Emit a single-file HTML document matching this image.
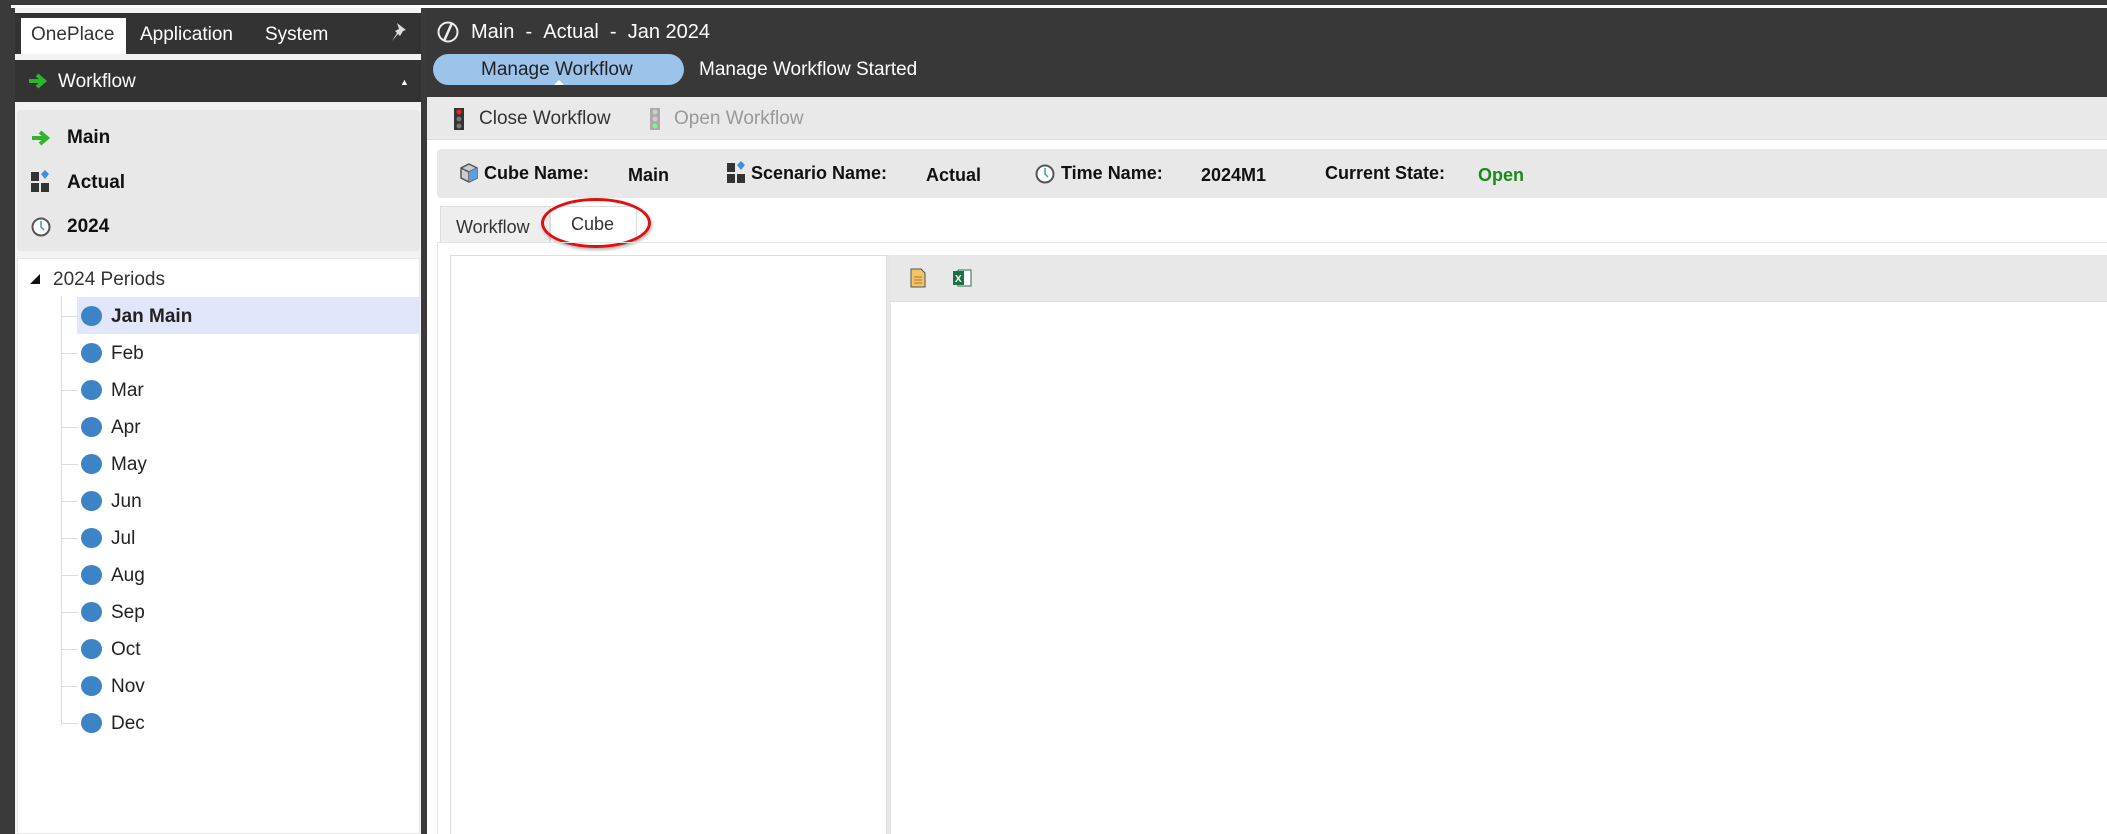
<!DOCTYPE html>
<html><head><meta charset="utf-8"><style>
*{box-sizing:border-box;margin:0;padding:0}
body{width:2107px;height:834px;background:#3a3a3a;position:relative;overflow:hidden;font-family:"Liberation Sans",sans-serif;}
.a{position:absolute}
.t{position:absolute;white-space:nowrap}
</style></head><body>
<div class="a" style="left:0;top:0;width:2107px;height:5px;background:#3a3a3a"></div>
<div class="a" style="left:11px;top:5px;width:2096px;height:3px;background:#fff"></div>
<!-- left panel -->
<div class="a" style="left:15px;top:8px;width:406px;height:826px;background:#f3f3f3"></div>
<div class="a" style="left:15px;top:13px;width:406px;height:41px;background:#333"></div>
<div class="a" style="left:21px;top:18px;width:105px;height:36px;background:#fff"></div>
<div class="t" style="left:31px;top:24px;font-size:19px;color:#333">OnePlace</div>
<div class="t" style="left:140px;top:24px;font-size:19px;color:#fff">Application</div>
<div class="t" style="left:265px;top:24px;font-size:19px;color:#fff">System</div>
<svg class="a" style="left:389px;top:21px" width="20" height="22" viewBox="0 0 20 22"><path d="M8 2l9 7-3 1-3 5-2-2-6 7 5-8-2-2 4-2z" fill="#ddd"/></svg>
<div class="a" style="left:15px;top:60px;width:406px;height:42px;background:#333"></div>
<svg class="a" style="left:27px;top:72px" width="22" height="18"><path d="M2 9h14M10 3l7 6-7 6" stroke="#2db52d" stroke-width="4" fill="none"/></svg>
<div class="t" style="left:58px;top:71px;font-size:19px;color:#fff">Workflow</div>
<div class="t" style="left:400px;top:77px;font-size:9px;color:#fff">▲</div>
<div class="a" style="left:17px;top:110px;width:403px;height:141px;background:#e8e8e8;border-radius:3px"></div>
<svg class="a" style="left:30px;top:129px" width="22" height="18"><path d="M2 9h14M10 3l7 6-7 6" stroke="#2db52d" stroke-width="4" fill="none"/></svg>
<div class="t" style="left:67px;top:127px;font-size:19px;font-weight:bold;color:#111">Main</div>
<svg class="a" style="left:30px;top:170px" width="22" height="24"><rect x="1" y="2" width="8" height="9" fill="#333"/><rect x="1" y="13" width="8" height="9" fill="#333"/><rect x="11" y="13" width="8" height="9" fill="#333"/><path d="M15 0l4 4-4 5-4-5z" fill="#3f8fd8"/></svg>
<div class="t" style="left:67px;top:172px;font-size:19px;font-weight:bold;color:#111">Actual</div>
<svg class="a" style="left:30px;top:216px" width="22" height="22"><circle cx="11" cy="11" r="8.5" stroke="#555" stroke-width="2" fill="#fff"/><path d="M11 5v6l3 3" stroke="#3f8fd8" stroke-width="1.5" fill="none"/></svg>
<div class="t" style="left:67px;top:216px;font-size:19px;font-weight:bold;color:#111">2024</div>
<div class="a" style="left:17px;top:258px;width:403px;height:576px;background:#fff;border:1px solid #e6e6e6"></div>
<svg class="a" style="left:28px;top:272px" width="14" height="14"><path d="M12 2v10H2z" fill="#111"/></svg>
<div class="t" style="left:53px;top:269px;font-size:19px;color:#333">2024 Periods</div>
<div class="a" style="left:61px;top:296px;width:1px;height:430px;background:#ddd"></div>
<div class="a" style="left:77px;top:297px;width:342px;height:37px;background:#e2e6fb"></div>
<div id="tree"></div>
<!-- right panel -->
<div class="a" style="left:427px;top:8px;width:1680px;height:826px;background:#fff"></div>
<div class="a" style="left:427px;top:8px;width:1680px;height:89px;background:#383838"></div>
<svg class="a" style="left:436px;top:20px" width="24" height="24"><circle cx="12" cy="12" r="9.5" stroke="#eee" stroke-width="2" fill="none"/><path d="M16 3L8 21" stroke="#eee" stroke-width="2.5"/></svg>
<div class="t" style="left:471px;top:21px;font-size:20px;color:#fff">Main &nbsp;- &nbsp;Actual &nbsp;- &nbsp;Jan 2024</div>
<div class="a" style="left:433px;top:54px;width:251px;height:31px;background:#9cc3ea;border-radius:16px"></div>
<div class="t" style="left:481px;top:59px;font-size:19px;color:#222">Manage Workflow</div>
<div class="a" style="left:554px;top:80px;width:0;height:0;border-left:5px solid transparent;border-right:5px solid transparent;border-bottom:5px solid #fff"></div>
<div class="t" style="left:699px;top:59px;font-size:19px;color:#fff">Manage Workflow Started</div>
<div class="a" style="left:427px;top:97px;width:1680px;height:43px;background:#e9e9e9;border-bottom:1px solid #ddd"></div>
<svg class="a" style="left:454px;top:108px" width="10" height="22"><rect width="10" height="22" fill="#333"/><circle cx="5" cy="4" r="2.5" fill="#e22"/><circle cx="5" cy="11" r="2.5" fill="#777"/><circle cx="5" cy="18" r="2.5" fill="#777"/></svg>
<div class="t" style="left:479px;top:108px;font-size:19px;color:#333">Close Workflow</div>
<svg class="a" style="left:650px;top:108px" width="10" height="22"><rect width="10" height="22" fill="#aaa"/><circle cx="5" cy="4" r="2.5" fill="#ccc"/><circle cx="5" cy="11" r="2.5" fill="#ccc"/><circle cx="5" cy="18" r="2.5" fill="#8e8"/></svg>
<div class="t" style="left:674px;top:108px;font-size:19px;color:#999">Open Workflow</div>
<div class="a" style="left:437px;top:149px;width:1670px;height:49px;background:#e8e8e8;border-radius:4px 0 0 4px"></div>
<svg class="a" style="left:460px;top:163px" width="18" height="20"><path d="M9 1l8 4v10l-8 4-8-4V5z" fill="#ccc" stroke="#555" stroke-width="1.5"/><path d="M9 9v10M1 5l8 4 8-4" stroke="#555" stroke-width="1.5" fill="none"/><path d="M9 9l8-4v10l-8 4z" fill="#5aa0e0"/></svg>
<div class="t" style="left:484px;top:163px;font-size:18px;font-weight:bold;color:#111">Cube Name:</div>
<div class="t" style="left:628px;top:165px;font-size:18px;font-weight:bold;color:#111">Main</div>
<svg class="a" style="left:726px;top:161px" width="22" height="24"><rect x="1" y="2" width="8" height="9" fill="#333"/><rect x="1" y="13" width="8" height="9" fill="#333"/><rect x="11" y="13" width="8" height="9" fill="#333"/><path d="M15 0l4 4-4 5-4-5z" fill="#3f8fd8"/></svg>
<div class="t" style="left:751px;top:163px;font-size:18px;font-weight:bold;color:#111">Scenario Name:</div>
<div class="t" style="left:926px;top:165px;font-size:18px;font-weight:bold;color:#111">Actual</div>
<svg class="a" style="left:1034px;top:163px" width="22" height="22"><circle cx="11" cy="11" r="8.5" stroke="#555" stroke-width="2" fill="#fff"/><path d="M11 5v6l3 3" stroke="#3f8fd8" stroke-width="1.5" fill="none"/></svg>
<div class="t" style="left:1061px;top:163px;font-size:18px;font-weight:bold;color:#111">Time Name:</div>
<div class="t" style="left:1201px;top:165px;font-size:18px;font-weight:bold;color:#111">2024M1</div>
<div class="t" style="left:1325px;top:163px;font-size:18px;font-weight:bold;color:#111">Current State:</div>
<div class="t" style="left:1478px;top:165px;font-size:18px;font-weight:bold;color:#1a8a1a">Open</div>
<!-- tabs -->
<div class="a" style="left:440px;top:206px;width:110px;height:36px;background:#eee;border:1px solid #ddd;border-bottom:none"></div>
<div class="t" style="left:456px;top:217px;font-size:18px;color:#333">Workflow</div>
<div class="a" style="left:550px;top:206px;width:87px;height:37px;background:#fff;border:1px solid #ddd;border-bottom:none"></div>
<div class="t" style="left:571px;top:214px;font-size:18px;color:#333">Cube</div>
<div class="a" style="left:541px;top:198px;width:110px;height:50px;border:3px solid #e01010;border-radius:50%;box-shadow:1px 2px 3px rgba(0,0,0,.3)"></div>
<div class="a" style="left:437px;top:242px;width:1670px;height:592px;border:1px solid #e4e4e4;border-right:none;border-bottom:none"></div>
<div class="a" style="left:450px;top:255px;width:437px;height:579px;border:1px solid #ddd;border-bottom:none"></div>
<div class="a" style="left:887px;top:255px;width:4px;height:579px;background:#e6e6e6"></div>
<div class="a" style="left:891px;top:255px;width:1216px;height:47px;background:#e8e8e8;border-bottom:1px solid #ddd"></div>
<svg class="a" style="left:910px;top:268px" width="16" height="20"><path d="M1 1h10l4 4v14H1z" fill="#f4c36a" stroke="#555"/><path d="M4 9h8M4 12h8M4 15h8" stroke="#b07a20"/></svg>
<svg class="a" style="left:952px;top:268px" width="20" height="20"><rect x="6" y="2" width="13" height="16" fill="#fff" stroke="#1e7145"/><rect x="1" y="3" width="11" height="14" fill="#1e7145"/><text x="3" y="14" font-size="10" font-weight="bold" fill="#fff" font-family="Liberation Sans">X</text></svg>
<script>
var m=["Jan Main","Feb","Mar","Apr","May","Jun","Jul","Aug","Sep","Oct","Nov","Dec"],h="";
for(var i=0;i<12;i++){var y=316+i*37;
h+='<div class="a" style="left:62px;top:'+y+'px;width:16px;height:1px;background:#ddd"></div>';
h+='<div class="a" style="left:81px;top:'+(y-10)+'px;width:21px;height:20px;border-radius:50%;background:#3d84c6"></div>';
h+='<div class="t" style="left:111px;top:'+(y-10)+'px;font-size:19px;color:#222;'+(i==0?'font-weight:bold':'')+'">'+m[i]+'</div>';}
document.getElementById('tree').innerHTML=h;
</script>
</body></html>
